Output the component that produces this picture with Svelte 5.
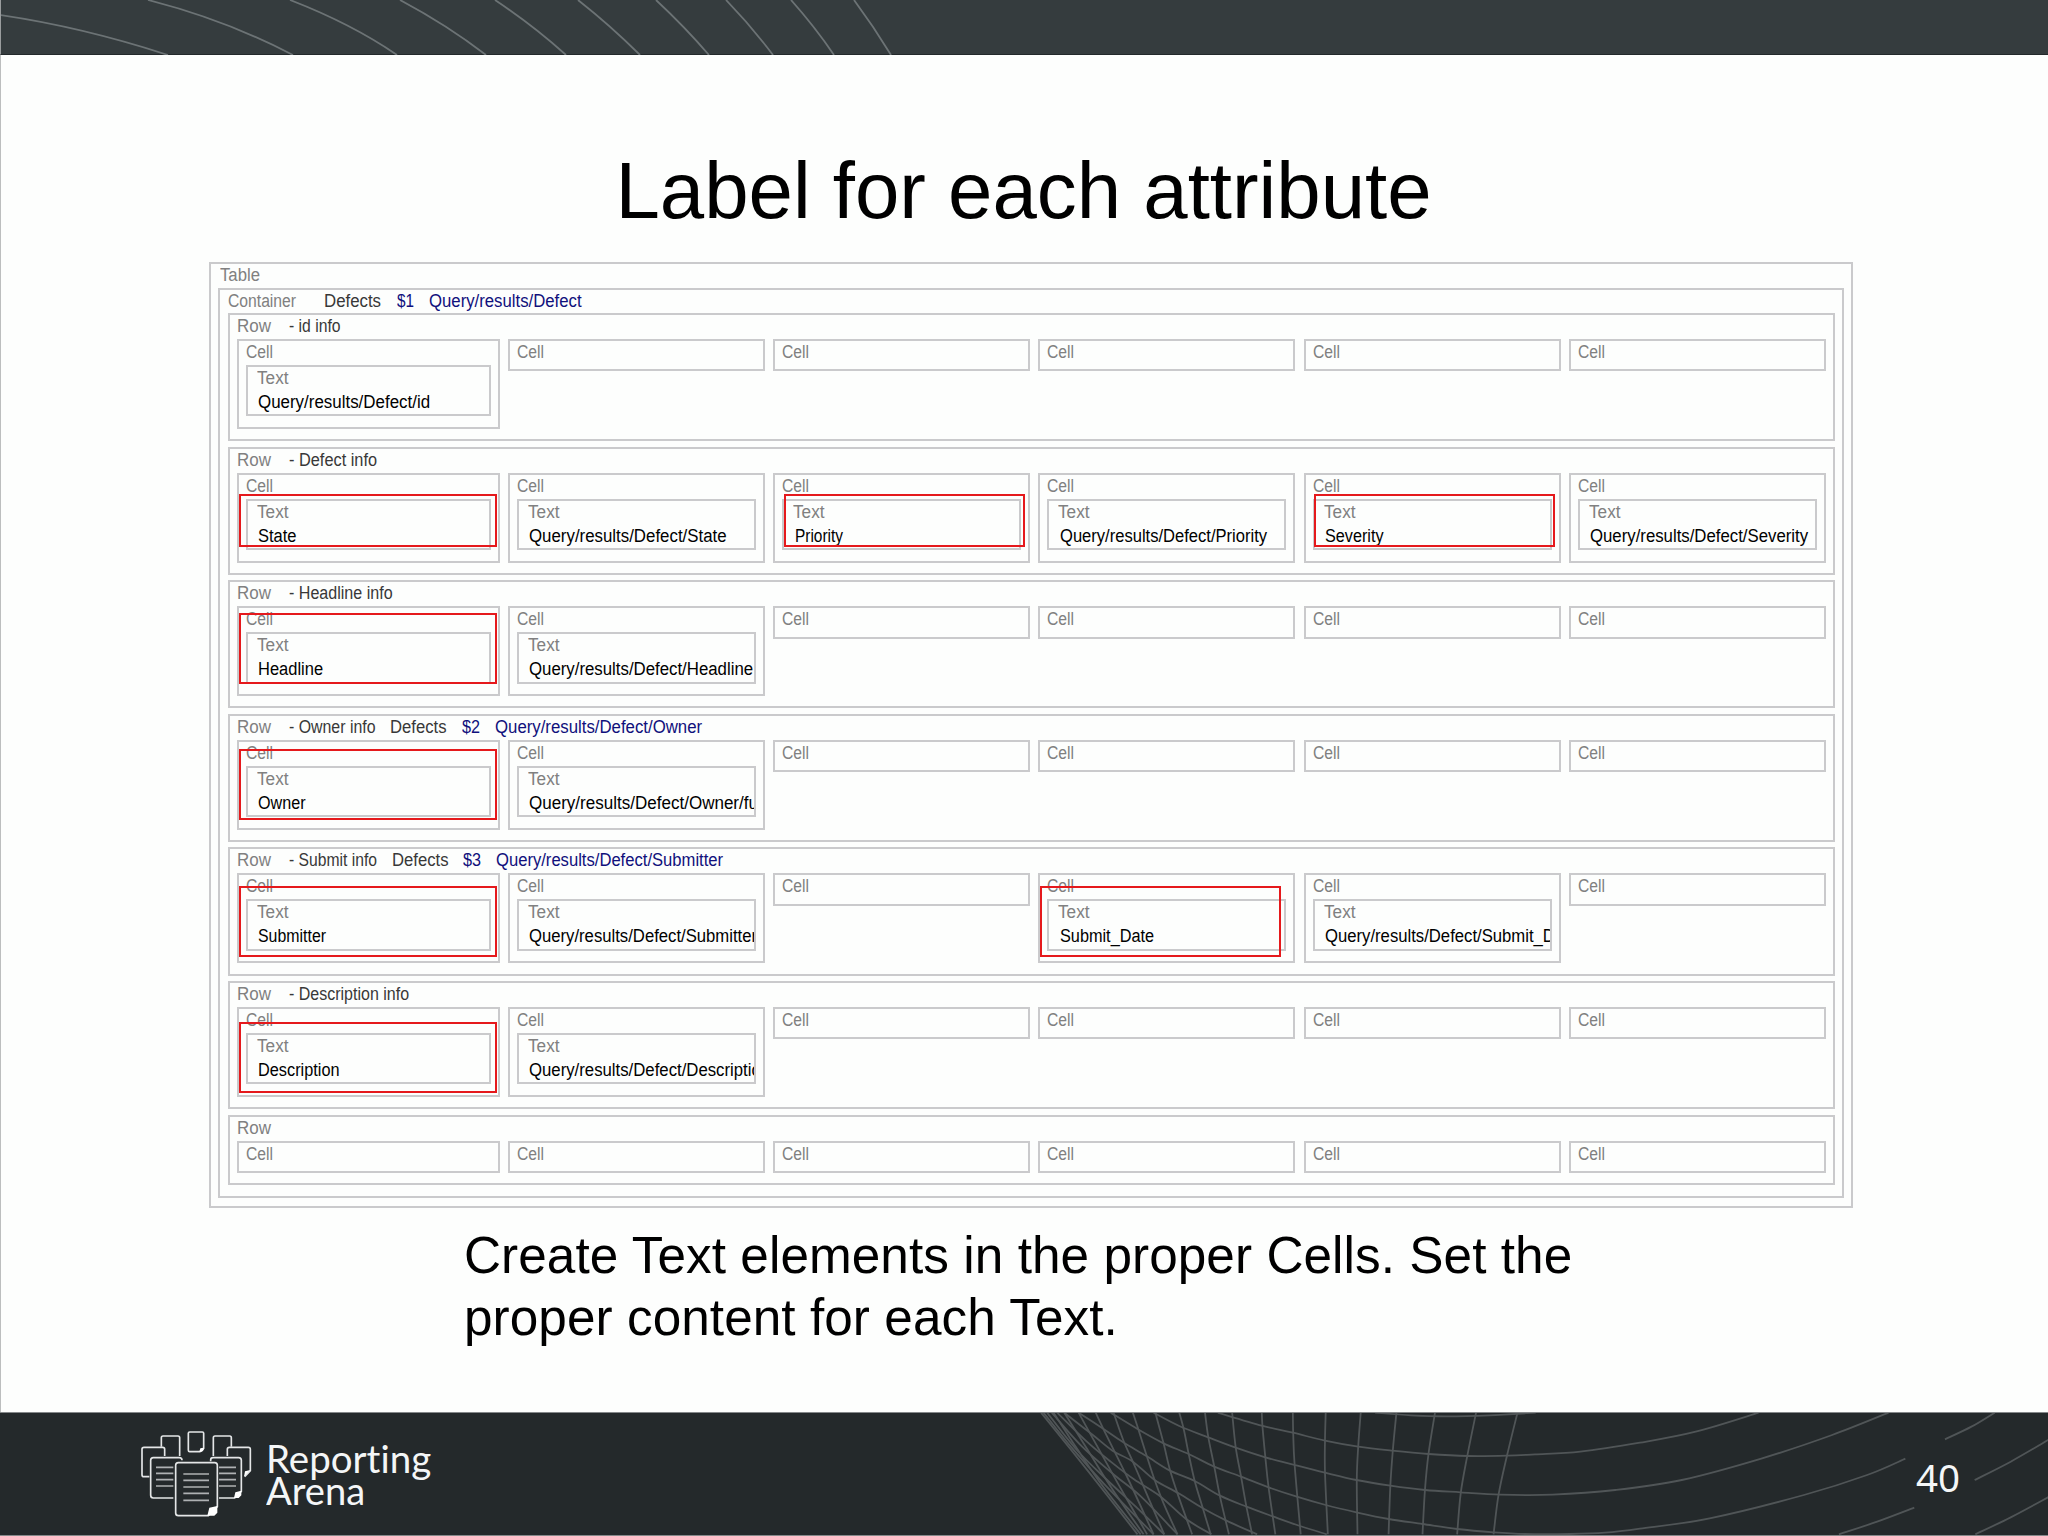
<script lang="ts">
	type Point = [number, number];
	type Mark = { left: number; top: number; width: number; height: number };
	type Value = { text: string; width: number; mark?: Mark };
	type Row = {
		name?: { text: string; width: number };
		query?: { id: string; path: string; width: number };
		cells: (Value | null)[];
	};

	const rows: Row[] = [
		{
			name: { text: "- id info", width: 51.5 },
			cells: [{ text: "Query/results/Defect/id", width: 172 }, null, null, null, null, null],
		},
		{
			name: { text: "- Defect info", width: 88 },
			cells: [
				{ text: "State", width: 38.5, mark: { left: 0, top: 19, width: 258, height: 53 } },
				{ text: "Query/results/Defect/State", width: 197.5 },
				{ text: "Priority", width: 48, mark: { left: 9, top: 19, width: 241, height: 53 } },
				{ text: "Query/results/Defect/Priority", width: 207 },
				{ text: "Severity", width: 58.5, mark: { left: 8, top: 19, width: 241, height: 53 } },
				{ text: "Query/results/Defect/Severity", width: 218 },
			],
		},
		{
			name: { text: "- Headline info", width: 103.5 },
			cells: [
				{ text: "Headline", width: 65, mark: { left: 0, top: 4.5, width: 258, height: 71 } },
				{ text: "Query/results/Defect/Headline", width: 224 },
				null,
				null,
				null,
				null,
			],
		},
		{
			name: { text: "- Owner info", width: 86.5 },
			query: { id: "$2", path: "Query/results/Defect/Owner", width: 207 },
			cells: [
				{ text: "Owner", width: 47.5, mark: { left: 0, top: 7.5, width: 258, height: 71 } },
				{ text: "Query/results/Defect/Owner/fullname", width: 279 },
				null,
				null,
				null,
				null,
			],
		},
		{
			name: { text: "- Submit info", width: 88 },
			query: { id: "$3", path: "Query/results/Defect/Submitter", width: 227 },
			cells: [
				{ text: "Submitter", width: 68, mark: { left: 0, top: 11, width: 258, height: 71 } },
				{ text: "Query/results/Defect/Submitter", width: 228 },
				null,
				{ text: "Submit_Date", width: 94, mark: { left: 0, top: 11, width: 241, height: 71 } },
				{ text: "Query/results/Defect/Submit_Date", width: 253 },
				null,
			],
		},
		{
			name: { text: "- Description info", width: 120 },
			cells: [
				{ text: "Description", width: 81.5, mark: { left: 0, top: 13.5, width: 258, height: 71 } },
				{ text: "Query/results/Defect/Description", width: 241 },
				null,
				null,
				null,
				null,
			],
		},
		{ cells: [null, null, null, null, null, null] },
	];

	const header_arcs = [
		"M0 15 Q82 27 168 55",
		"M148 0 Q226 20 293 55",
		"M290 0 Q352 24 397 55",
		"M400 0 Q447 25 486 55",
		"M495 0 Q534 26 566 55",
		"M578 0 Q611 26 640 55",
		"M656 0 Q685 27 709 55",
		"M726 0 Q752 27 773 55",
		"M791 0 Q815 27 834 55",
		"M854 0 Q874 27 891 55",
	];

	const mesh: Point[][] = [
		[[1449, 38], [1420, 165], [1396, 284], [1382, 403]],
		[[1333, 38], [1308, 170], [1290, 280], [1280, 403]],
		[[1218, 38], [1200, 160], [1190, 268], [1183, 403]],
		[[1110, 38], [1100, 150], [1093, 257], [1088, 403]],
		[[1010, 38], [1003, 140], [999, 240], [1001, 403]],
		[[912, 38], [910, 120], [910, 218], [918, 403]],
		[[820, 38], [821, 100], [825, 195], [842, 403]],
		[[733, 38], [735, 80], [743, 172], [752, 262], [771, 403]],
		[[650, 38], [660, 142], [675, 230], [690, 320], [706, 403]],
		[[574, 38], [583, 110], [600, 200], [616, 290], [641, 403]],
		[[502, 38], [515, 90], [528, 160], [545, 242], [568, 325], [590, 403]],
		[[435, 38], [458, 130], [476, 210], [500, 290], [538, 403]],
		[[372, 38], [388, 90], [410, 165], [433, 240], [458, 310], [497, 403]],
		[[318, 38], [345, 120], [372, 185], [395, 242], [420, 305], [460, 403]],
		[[268, 38], [300, 110], [360, 240], [430, 403]],
		[[220, 38], [265, 125], [330, 250], [412, 403]],
		[[180, 38], [240, 140], [310, 260], [402, 403]],
		[[150, 38], [215, 145], [290, 262], [394, 403]],
		[[115, 38], [250, 218], [385, 403]],
		[[1050, 38], [1150, 46], [1250, 49], [1370, 46], [1500, 38]],
		[[610, 38], [733, 77], [820, 98], [910, 122], [1003, 140], [1098, 152], [1200, 162], [1310, 168], [1420, 167], [1498, 163], [1625, 155], [1792, 128], [1948, 95], [2124, 38]],
		[[430, 38], [502, 78], [583, 112], [660, 143], [743, 172], [825, 195], [910, 218], [998, 240], [1093, 257], [1190, 270], [1290, 277], [1400, 284], [1547, 284], [1723, 270], [1909, 240], [2134, 175], [2330, 105], [2488, 38]],
		[[310, 38], [385, 87], [458, 130], [528, 162], [600, 200], [675, 230], [752, 262], [831, 290], [912, 315], [998, 337], [1088, 357], [1183, 372], [1280, 387], [1382, 397], [1470, 402], [1595, 402], [1694, 398], [1792, 386], [1987, 355], [2251, 285], [2428, 225], [2535, 176]],
		[[220, 38], [290, 87], [345, 127], [410, 168], [476, 212], [545, 243], [616, 287], [690, 320], [766, 350], [840, 378], [915, 403]],
		[[180, 38], [260, 105], [315, 152], [372, 185], [433, 240], [500, 280], [568, 325], [634, 362], [720, 403]],
		[[160, 38], [240, 122], [310, 185], [375, 238], [450, 290], [522, 358], [592, 403]],
		[[145, 38], [230, 140], [320, 225], [395, 290], [497, 403]],
		[[132, 38], [215, 150], [300, 240], [380, 320], [460, 403]],
		[[122, 38], [200, 142], [290, 250], [430, 403]],
		[[2349, 403], [2456, 365], [2560, 323]],
		[[2646, 118], [2720, 80], [2785, 38]],
		[[2729, 240], [2830, 185], [2938, 118]],
		[[2731, 403], [2830, 352], [2938, 290]],
	];

	// Catmull-Rom spline through the points, as cubic beziers
	function smooth(points: Point[]) {
		let d = `M${points[0].join(" ")}`;
		for (let i = 0; i < points.length - 1; i++) {
			const a = points[i - 1] ?? points[i];
			const b = points[i];
			const c = points[i + 1];
			const e = points[i + 2] ?? c;
			d += `C${b[0] + (c[0] - a[0]) / 6} ${b[1] + (c[1] - a[1]) / 6} ${c[0] - (e[0] - b[0]) / 6} ${c[1] - (e[1] - b[1]) / 6} ${c[0]} ${c[1]}`;
		}
		return d;
	}

	// squeezes the text horizontally to the given width
	function fit(node: HTMLElement, width: number) {
		node.style.transform = `scaleX(${width / node.offsetWidth})`;
	}
</script>

{#snippet run(text: string, width: number, kind = "label")}
	<span class="run {kind}" style:width="{width}px"><span class="glyphs" use:fit={width}>{text}</span></span>
{/snippet}

<main>
	<header>
		<svg width="2047" height="55" viewBox="1 0 2047 55">
			{#each header_arcs as d}
				<path {d} />
			{/each}
		</svg>
	</header>

	<article>
		<h1>Label for each attribute</h1>

		<section class="table">
			<div class="head">{@render run("Table", 40)}</div>
			<div class="container">
				<div class="head">
					{@render run("Container", 68)}
					<div class="first query">
						{@render run("Defects", 57, "name")}
						{@render run("$1", 17, "path")}
						{@render run("Query/results/Defect", 152.5, "path")}
					</div>
				</div>
				<div class="rows">
					{#each rows as row}
						<div class="row" class:last={!row.name}>
							<div class="head">
								{@render run("Row", 34)}
								{#if row.name}
									<div class="query">
										{@render run(row.name.text, row.name.width, "name")}
										{#if row.query}
											{@render run("Defects", 56.5, "name")}
											{@render run(row.query.id, 18, "path")}
											{@render run(row.query.path, row.query.width, "path")}
										{/if}
									</div>
								{/if}
							</div>
							<div class="cells">
								{#each row.cells as cell}
									<div class="cell" class:filled={cell}>
										<div class="head">{@render run("Cell", 27)}</div>
										{#if cell}
											<div class="text">
												<div class="head">{@render run("Text", 31.5)}</div>
												<div class="value">{@render run(cell.text, cell.width, "value-run")}</div>
											</div>
											{#if cell.mark}
												<div
													class="mark"
													style:left="{cell.mark.left}px"
													style:top="{cell.mark.top}px"
													style:width="{cell.mark.width}px"
													style:height="{cell.mark.height}px"
												></div>
											{/if}
										{/if}
									</div>
								{/each}
							</div>
						</div>
					{/each}
				</div>
			</div>
		</section>

		<p>Create Text elements in the proper Cells. Set the<br />proper content for each Text.</p>
	</article>

	<footer>
		<svg class="mesh" width="2048" height="122" viewBox="0 0 2048 122">
			<g transform="translate(1000 -13) scale(0.35714 0.33333)">
				{#each mesh as points}
					<path d={smooth(points)} />
				{/each}
			</g>
		</svg>
		<div class="brand">
			<svg class="logo" width="114" height="88" viewBox="60 90 342 264">
				<path d="M124 140V113q0-5 5-5H174q5 0 5 5V168M280 168V113q0-5 5-5H329q5 0 5 5V140" />
				<path d="M205 100q0-4 4-4H247q4 0 4 4V145L240 155H209q-4 0-4-4Z" />
				<path d="M88 230H72q-6 0-6-6V148q0-6 6-6H128q6 0 6 6V168M322 168V148q0-6 6-6H385q6 0 6 6V212L374 230" />
				<path d="M160 294H100q-8 0-8-8V181q0-8 8-8H178q8 0 8 8M272 184v-4q0-7 7-7H356q8 0 8 8V274L344 294H297" />
				<path d="M167 196q0-8 8-8H284q8 0 8 8V320L265 347H175q-8 0-8-8Z" />
				<path class="fold" d="M251 143V150L246 155H238L241 145ZM391 210L372 230L375 214ZM364 272V286L356 294H342L346 277ZM292 318V338L283 347H262L268 323Z" />
				<path class="lines" d="M190 222H267M190 241H267M190 261H267M190 280H267M190 301H267" />
				<path class="lines" d="M108 202H160M108 220H160M108 239H160M108 258H160M297 202H348M297 220H348M297 239H348M297 258H348" />
			</svg>
			<div class="brand-name">
				{@render run("Reporting", 165, "word")}
				{@render run("Arena", 99, "word")}
			</div>
		</div>
		<span class="page">40</span>
	</footer>
</main>

<style>
	:global(body) {
		background-color: #fdfefd;
	}
	main {
		display: flex;
		flex-direction: column;
		box-sizing: border-box;
		width: 2048px;
		height: 1536px;
		overflow: hidden;
		font-family: "Liberation Sans", Arial, sans-serif;
		color: #000;
	}
	svg {
		display: block;
		fill: none;
	}
	header {
		height: 54px;
		background-color: #353c3e;
		border-bottom: 1px solid #23292b;
		border-left: 1px solid #9a9d9e;

		path {
			stroke: #6c7375;
			stroke-width: 1.8;
		}
	}
	article {
		box-sizing: border-box;
		height: 1357px;
		border-left: 1px solid #bcbebe;
		padding-left: 208px;
	}
	h1 {
		margin: 0 195px 0 0;
		padding-right: 15px;
		padding-top: 90px;
		height: 117px;
		font-size: 79.8px;
		font-weight: normal;
		line-height: 92px;
		text-align: center;
	}
	p {
		margin: 17px 0 0 255px;
		font-size: 51.3px;
		letter-spacing: 0.06px;
		line-height: 61.5px;
		white-space: nowrap;
	}

	.run {
		display: block;
		flex: none;
		white-space: nowrap;
	}
	.glyphs {
		display: inline-block;
		transform-origin: 0 0;
	}
	.label {
		color: #808080;
	}
	.name {
		color: #383838;
	}
	.path {
		color: #10107c;
	}
	.head {
		display: flex;
		height: 24px;
		font-size: 18px;
		line-height: 23.5px;
	}
	.query {
		display: flex;
		gap: 15px;
		margin-left: 18px;

		&.first {
			gap: 15.5px;
			margin-left: 28px;
		}
	}

	.table,
	.container,
	.row,
	.cell,
	.text {
		box-sizing: border-box;
		border: 2px solid #cacacc;
	}
	.table {
		width: 1644px;
		height: 946px;
		padding: 0 7px;
	}
	.table > .head {
		height: 23.6px;
		padding-left: 1.5px;
	}
	.container {
		height: 910px;
		padding: 0 7.5px 0 8px;
	}
	.container > .head {
		height: 23.4px;
	}
	.rows {
		display: flex;
		flex-direction: column;
		gap: 5.3px;
	}
	.row {
		height: 128.3px;
		padding: 0 6.5px;

		&.last {
			height: 70px;
		}
	}
	.cells {
		display: grid;
		grid-template-columns: 263px repeat(5, 257px);
		gap: 8.3px;
		align-items: start;
	}
	.cell {
		position: relative;
		height: 32.5px;
		padding: 0 7px;

		&.filled {
			height: 90px;
		}
	}
	.text {
		height: 51.5px;
		padding-left: 9px;
		overflow: hidden;
	}
	.value {
		padding-left: 1.5px;
		font-size: 18px;
		line-height: 22px;
	}
	.mark {
		position: absolute;
		box-sizing: border-box;
		border: 2px solid #e5191c;
	}

	footer {
		position: relative;
		display: flex;
		justify-content: space-between;
		box-sizing: border-box;
		height: 124px;
		background-color: #24292b;
		border-top: 1px solid #85888a;
		border-bottom: 1px solid #85888a;
	}
	.mesh {
		position: absolute;
		top: 0;
		left: 0;

		path {
			stroke: #505557;
			stroke-width: 1.8;
			vector-effect: non-scaling-stroke;
		}
	}
	.brand {
		display: flex;
		padding: 17px 0 0 140px;
	}
	.logo {
		stroke: #e4e6e7;
		stroke-width: 5;

		.fold {
			fill: #fff;
			stroke: none;
		}
		.lines {
			stroke: #aeb1b3;
		}
	}
	.brand-name {
		padding: 13px 0 0 12px;
		color: #f4f6f7;
		font-family: Lato, sans-serif;
		font-size: 38.5px;
		font-variant-ligatures: none;
		line-height: 31.5px;
	}
	.page {
		position: relative;
		padding: 29px 88px 0 0;
		color: #f4f6f7;
		font-family: "Noto Sans", sans-serif;
		font-size: 38.5px;
		line-height: 70px;
	}
</style>
